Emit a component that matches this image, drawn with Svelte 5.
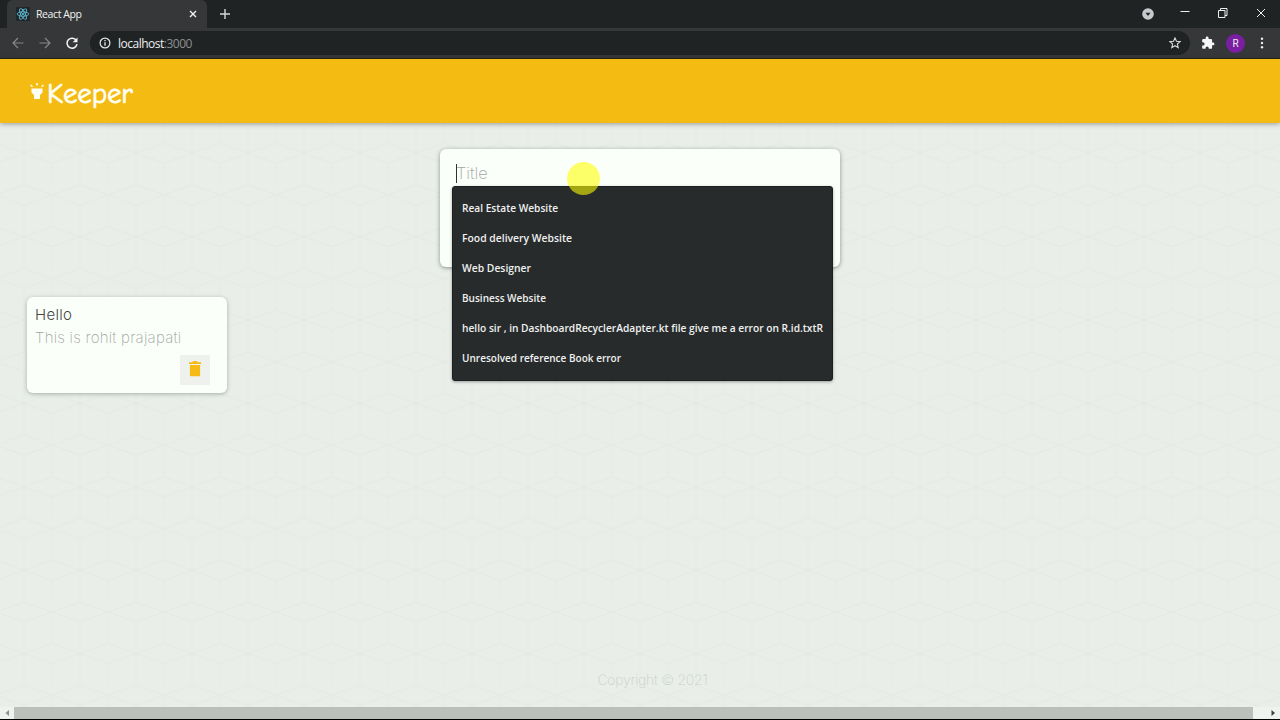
<script>
  let title = $state('')
  let note = $state({ title: 'Hello', content: 'This is rohit prajapati' })

  const suggestions = [
    { text: 'Real Estate Website', width: 96 },
    { text: 'Food delivery Website', width: 110 },
    { text: 'Web Designer', width: 69 },
    { text: 'Business Website', width: 84 },
    { text: 'hello sir , in DashboardRecyclerAdapter.kt file give me a error on R.id.txtR', width: 361 },
    { text: 'Unresolved reference Book error', width: 159 }
  ]
</script>

<div class="window">
  <div class="tabs">
    <div class="tab">
      <svg class="react" viewBox="0 0 14 14" width="14" height="14">
        <rect width="14" height="14" rx="1" fill="#20262a"/>
        <g fill="none" stroke="#5bb9cf" stroke-width=".9">
          <ellipse cx="7" cy="7" rx="5.8" ry="2.2"/>
          <ellipse cx="7" cy="7" rx="5.8" ry="2.2" transform="rotate(60 7 7)"/>
          <ellipse cx="7" cy="7" rx="5.8" ry="2.2" transform="rotate(120 7 7)"/>
        </g>
        <circle cx="7" cy="7" r="1" fill="#61cfe8"/>
      </svg>
      <span class="tab-title">React App</span>
      <svg class="close" viewBox="0 0 8 8" width="8" height="8"><path d="M1 1l6 6M7 1l-6 6" stroke="#f1f3f4" stroke-width="1.4"/></svg>
    </div>
    <svg class="plus" viewBox="0 0 12 12" width="12" height="12"><path d="M6 1v10M1 6h10" stroke="#d5d8da" stroke-width="1.4"/></svg>
    <div class="controls">
      <svg viewBox="0 0 12 12" width="12" height="12"><circle cx="6" cy="6" r="5.8" fill="#c6cacc"/><path d="M3.5 4.8h5L6 8z" fill="#202425"/></svg>
      <svg viewBox="0 0 10 10" width="10" height="10"><path d="M.5 3.5h9" stroke="#eee"/></svg>
      <svg viewBox="0 0 10 10" width="10" height="10"><path d="M.5 2.5H7v7H.5zM2.5 2.5V.5H9v7H7" fill="none" stroke="#eee"/></svg>
      <svg viewBox="0 0 10 10" width="10" height="10"><path d="M1 1l8 8M9 1l-8 8" stroke="#eee"/></svg>
    </div>
  </div>

  <div class="toolbar">
    <svg viewBox="0 0 12 12" width="12" height="12"><path d="M11.5 6H1M6 1L1 6l5 5" fill="none" stroke="#85888a" stroke-width="1.2"/></svg>
    <svg viewBox="0 0 12 12" width="12" height="12"><path d="M.5 6H11M6 1l5 5-5 5" fill="none" stroke="#85888a" stroke-width="1.2"/></svg>
    <svg viewBox="0 0 12 12" width="12" height="12"><path d="M10.3 3.5A5 5 0 1 0 11 7.2" fill="none" stroke="#f1f3f4" stroke-width="1.5"/><path d="M11.5.5v4.8H6.7z" fill="#f1f3f4"/></svg>
    <div class="address">
      <svg viewBox="0 0 12 12" width="12" height="12"><circle cx="6" cy="6" r="4.9" fill="none" stroke="#e8eaed" stroke-width="1.2"/><path d="M6 5.2v3.5M6 3v1.3" stroke="#e8eaed" stroke-width="1.3"/></svg>
      <span class="url">localhost<i>:3000</i></span>
      <svg class="star" viewBox="0 0 12 12" width="12" height="12"><path d="M6 .9l1.450 3.400 3.700.3-2.800 2.450.85 3.600L6 8.750l-3.200 1.900.85-3.600L.85 4.600l3.700-.3z" fill="none" stroke="#d8dadc" stroke-width="1.1"/></svg>
    </div>
    <svg class="puzzle" viewBox="0 0 24 24" width="14" height="14"><path d="M20.5 11H19V7a2 2 0 0 0-2-2h-4V3.500a2.500 2.500 0 0 0-5 0V5H4a2 2 0 0 0-2 2v3.800h1.500a2.700 2.700 0 0 1 0 5.400H2V20a2 2 0 0 0 2 2h3.800v-1.500a2.700 2.700 0 0 1 5.400 0V22H17a2 2 0 0 0 2-2v-4h1.500a2.500 2.500 0 0 0 0-5z" fill="#f5f6f6"/></svg>
    <span class="avatar">R</span>
    <svg class="menu" viewBox="0 0 4 12" width="4" height="12" fill="#eee"><circle cx="2" cy="1.7" r="1.2"/><circle cx="2" cy="6" r="1.2"/><circle cx="2" cy="10.3" r="1.2"/></svg>
  </div>

  <div class="page">
    <svg class="pattern" width="1280" height="648">
      <defs>
        <!-- staggered cubes, two rows per tile -->
        <pattern id="cubes" x="948" y="126" width="56" height="83.4" patternUnits="userSpaceOnUse">
          <path d="M0 10L28 0L56 10L28 20ZM28 20V51.7M0 10V41.7M56 10V41.7M0 41.7L28 51.7L56 41.7M28 51.7L0 61.7M28 51.7L56 61.7M0 61.7V83.4M56 61.7V83.4M28 51.7V83.4" fill="none" stroke="#e4e9e4"/>
        </pattern>
      </defs>
      <rect width="1280" height="648" fill="url(#cubes)"/>
    </svg>

    <header>
      <svg viewBox="0 0 16 18" width="16" height="18" fill="#fffef2" stroke="#fffef2">
        <path d="M2.500 6.500h11v4l-2.500 2.500V17H5v-4L2.500 10.500z" stroke="none"/>
        <path d="M8 1v2.500M1.500 3l2 1.700M14.500 3l-2 1.700" stroke-width="1.5"/>
      </svg>
      <h1>Keeper</h1>
    </header>

    <form>
      <input bind:value={title} placeholder="Title" autocomplete="off"/>
      <span class="caret"></span>
      <ul>
        {#each suggestions as { text, width }}
          <li>
            <svg width="370" height="20"><text x="0" y="14" textLength={width} lengthAdjust="spacingAndGlyphs">{text}</text></svg>
          </li>
        {/each}
      </ul>
      <span class="pointer"></span>
    </form>

    <article>
      <h2>{note.title}</h2>
      <p>{note.content}</p>
      <button aria-label="Delete">
        <svg viewBox="0 0 14 18" width="14" height="18" fill="#f5ba13"><path d="M1 2.200h3.300L5.300 1h3.400l1 1.200H13V4H1zM1.900 5h10.200v10q0 1.300-1.300 1.300H3.200Q1.900 16.300 1.900 15z"/></svg>
      </button>
    </article>

    <footer>Copyright © 2021</footer>
  </div>

  <div class="scrollbar">
    <svg viewBox="0 0 14 12" width="14" height="12"><path d="M9 3v6L5.500 6z" fill="#8c908d"/></svg>
    <div class="thumb"></div>
    <svg class="right" viewBox="0 0 14 12" width="14" height="12"><path d="M5.500 3v6L9 6z" fill="#3c403d"/></svg>
  </div>
</div>

<style>
  :global(body) {
    overflow: hidden;
    background: #000;
  }

  * {
    box-sizing: border-box;
  }

  svg {
    display: block;
    flex: none;
  }

  .window {
    width: 1280px;
    height: 720px;
    display: flex;
    flex-direction: column;
    font-family: "Open Sans", "Noto Sans", sans-serif;
  }

  .tabs {
    height: 28px;
    flex: none;
    display: flex;
    align-items: center;
    background: #1f2324;
    padding-left: 7px;
  }

  .tab {
    width: 200px;
    height: 28px;
    display: flex;
    align-items: center;
    padding: 0 10px 0 9px;
    background: #353739;
    border-radius: 6px 6px 0 0;
    color: #f1f3f4;
    font-size: 10.5px;
  }

  .tab-title {
    margin-left: 6px;
    letter-spacing: -0.4px;
  }

  .close {
    margin-left: auto;
  }

  .plus {
    margin-left: 12px;
  }

  .controls {
    margin: -3px 14px 0 auto;
    display: flex;
    align-items: center;
    gap: 28px;
  }

  .controls svg:first-child {
    margin: 3px -2px 0 0;
  }

  .toolbar {
    height: 31px;
    flex: none;
    display: flex;
    align-items: center;
    gap: 15px;
    padding: 0 16px 0 12px;
    background: #353739;
    border-bottom: 1px solid #2c251b;
  }

  .address {
    flex: 1;
    height: 24px;
    display: flex;
    align-items: center;
    padding: 0 9px;
    margin-left: -3px;
    background: #1f2324;
    border-radius: 12px;
    color: #eceeef;
    font-size: 12px;
  }

  .url {
    margin-left: 7px;
    letter-spacing: -0.5px;
  }

  .url i {
    font-style: normal;
    color: #8c9092;
  }

  .star {
    margin-left: auto;
  }

  .puzzle {
    margin-left: -4px;
  }

  .avatar {
    width: 19px;
    height: 19px;
    margin-left: -4px;
    border-radius: 50%;
    background: #7b1fa2;
    color: #eee;
    font: 10px/19px Roboto, sans-serif;
    text-align: center;
  }

  .page {
    height: 648px;
    flex: none;
    position: relative;
    background: #e9eee9;
    display: flex;
    flex-direction: column;
  }

  .pattern {
    position: absolute;
    inset: 0;
  }

  header {
    height: 64px;
    flex: none;
    position: relative;
    display: flex;
    align-items: center;
    padding-left: 29px;
    background: #f4bb12;
    box-shadow: 0 1px 5px rgba(0, 0, 0, .35);
  }

  header svg {
    margin-top: 0;
  }

  h1 {
    margin: 6px 0 0 2px;
    color: #fffef2;
    font: 500 29px/40px "Comic Neue", "Comic Sans MS", "Open Sans", sans-serif;
    letter-spacing: -0.2px;
    -webkit-text-stroke: 0.8px #fffef2;
  }

  form {
    width: 400px;
    height: 118px;
    position: relative;
    margin: 26px auto 0;
    padding: 12px 16px;
    background: #fbfffa;
    border-radius: 6px;
    box-shadow: 0 1px 4px rgba(70, 80, 75, .6);
  }

  input {
    display: block;
    width: 100%;
    height: 24px;
    padding: 0;
    border: 0;
    outline: none;
    background: none;
    font: 200 16.5px Inter, "Open Sans", sans-serif;
  }

  input::placeholder {
    color: #a2a6a2;
  }

  .caret {
    position: absolute;
    left: 16px;
    top: 15px;
    width: 1px;
    height: 19px;
    background: #303331;
  }

  ul {
    position: absolute;
    left: 12px;
    top: 37px;
    width: 381px;
    height: 195px;
    margin: 0;
    padding: 6px 9px;
    list-style: none;
    background: #282b2c;
    border: 1px solid #1c1f1f;
    border-radius: 3px;
    box-shadow: 0 1px 3px rgba(0, 0, 0, .35);
  }

  li {
    height: 30px;
    display: flex;
    align-items: center;
  }

  li svg {
    overflow: visible;
  }

  li text {
    fill: #eff1f0;
    font: 600 11px "Open Sans", "Noto Sans", sans-serif;
  }

  .pointer {
    position: absolute;
    left: 127px;
    top: 13px;
    width: 33px;
    height: 33px;
    border-radius: 50%;
    background: rgba(255, 255, 0, .58);
  }

  article {
    width: 200px;
    height: 96px;
    position: relative;
    display: flex;
    flex-direction: column;
    margin: 30px 0 0 27px;
    padding: 8px;
    background: #fbfffa;
    border-radius: 6px;
    box-shadow: 0 1px 4px rgba(70, 80, 75, .4);
    font-family: Inter, "Open Sans", sans-serif;
  }

  h2 {
    margin: 0;
    color: #444745;
    font-size: 15px;
    font-weight: 300;
    line-height: 20px;
    letter-spacing: 0.3px;
  }

  p {
    margin: 3px 0 0;
    color: #a0a4a1;
    font-size: 15px;
    font-weight: 200;
    line-height: 20px;
    letter-spacing: 0.25px;
    white-space: nowrap;
  }

  button {
    width: 30px;
    height: 30px;
    display: flex;
    align-items: center;
    justify-content: center;
    margin: 7px 9px 0 auto;
    padding: 0 0 3px;
    border: 0;
    background: #eff1ee;
  }

  footer {
    position: relative;
    margin-top: auto;
    padding: 0 0 16px 25px;
    color: #cbd0cb;
    font: 200 14px/22px Inter, "Open Sans", sans-serif;
    letter-spacing: -0.25px;
    text-align: center;
  }

  .scrollbar {
    height: 12px;
    flex: none;
    display: flex;
    background: #eff3ef;
  }

  .thumb {
    width: 1239px;
    background: #bbc0ba;
  }

  .right {
    margin-left: auto;
  }
</style>
